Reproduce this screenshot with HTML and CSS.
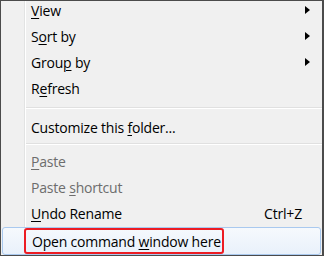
FILE: index.html
```html
<!DOCTYPE html>
<html>
<head>
<meta charset="utf-8">
<link rel="stylesheet" href="styles.css">
</head>
<body>
<div class="menu">
  <div class="item first"><span class="label"><u>V</u>iew</span><span class="arrow"></span></div>
  <div class="item"><span class="label">S<u>o</u>rt by</span><span class="arrow"></span></div>
  <div class="item"><span class="label">Grou<u>p</u> by</span><span class="arrow"></span></div>
  <div class="item"><span class="label">R<u>e</u>fresh</span></div>
  <div class="sep sep1"></div>
  <div class="item"><span class="label">Customize this <u>f</u>older...</span></div>
  <div class="sep sep2"></div>
  <div class="item disabled"><span class="label"><u>P</u>aste</span></div>
  <div class="item disabled"><span class="label">Paste <u>s</u>hortcut</span></div>
  <div class="item"><span class="label"><u>U</u>ndo Rename</span><span class="shortcut">Ctrl+Z</span></div>
  <div class="item hover"><span class="label">Open command <u>w</u>indow here</span><span class="callout"></span></div>
</div>
</body>
</html>
```
FILE: styles.css
```css
html, body {
  margin: 0;
  padding: 0;
  background: #f0f0f0;
}
.menu {
  width: 324px;
  height: 256px;
  box-sizing: border-box;
  border: 1px solid #4b4b4b;
  border-right-width: 2px;
  background: linear-gradient(to right, #f0f0f0 0, #f0f0f0 23px, #e2e3e3 23px, #e2e3e3 24px, #ffffff 24px, #ffffff 25px, #f0f0f0 25px);
  overflow: hidden;
  display: flex;
  flex-direction: column;
  font-family: "Open Sans", "Noto Sans", sans-serif;
  font-size: 14px;
  letter-spacing: -0.2px;
  color: #000;
}
.item {
  position: relative;
  flex: none;
  height: 26px;
  display: flex;
  align-items: center;
  padding: 0 19px 0 30px;
}
.item.first {
  margin-top: -4px;
}
.label {
  flex: 1;
  white-space: nowrap;
}
.label u {
  text-decoration-thickness: 1px;
  text-underline-offset: 2px;
}
.disabled {
  color: #6d6d6d;
}
.arrow {
  width: 0;
  height: 0;
  border-left: 5px solid #000;
  border-top: 4.5px solid transparent;
  border-bottom: 4.5px solid transparent;
  margin-right: -7px;
}
.shortcut {
  white-space: nowrap;
  margin-right: 1px;
}
.sep {
  flex: none;
  height: 0;
  border-top: 1px solid #e0e0e0;
  border-bottom: 1px solid #ffffff;
  margin-left: 25px;
}
.sep1 {
  margin-top: 6px;
  margin-bottom: 5px;
}
.sep2 {
  margin-top: 3px;
  margin-bottom: 3px;
}
.item.hover {
  margin: 1px 1px 0 1px;
  padding-left: 29px;
  border: 1px solid #a9c9ef;
  border-radius: 3px;
  background: linear-gradient(to bottom, #f6f9fd, #e9f1fb);
}
.callout {
  position: absolute;
  left: 21px;
  top: 0;
  width: 196px;
  height: 22px;
  border: 2px solid #ec1c24;
  border-radius: 3px;
}
```
